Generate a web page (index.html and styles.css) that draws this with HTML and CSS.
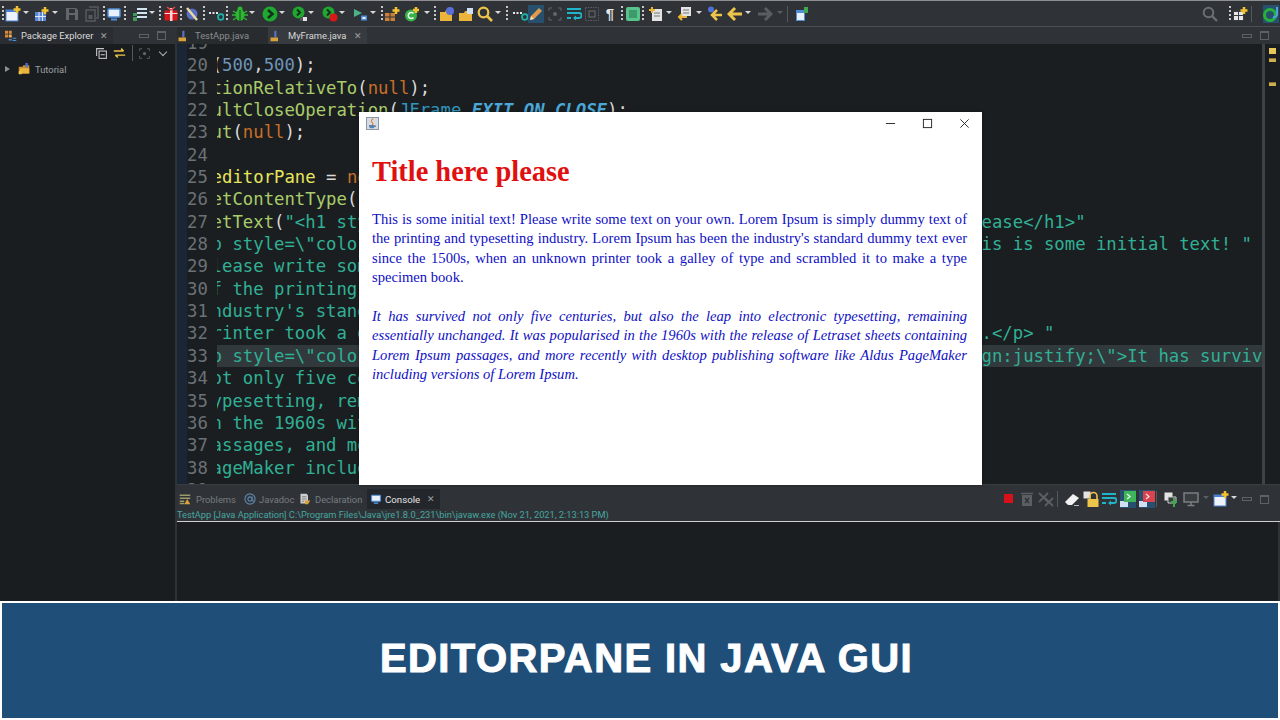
FILE: index.html
```html
<!doctype html>
<html lang="en">
  <head>
    <meta charset="UTF-8" />
    <title>EditorPane in Java GUI</title>
    <link rel="stylesheet" href="styles.css">
  </head>
  <body>
    <svg class="defs" width="0" height="0">
      <symbol id="i-new" viewBox="0 0 16 16"><rect x="1" y="4" width="12" height="11" fill="#eef3fb" stroke="#4a7fd0"/><rect x="1" y="4" width="12" height="2" fill="#4a7fd0"/><path d="M12 0v7M8.500 3.500h7" stroke="#f2c230" stroke-width="2.500"/></symbol>
      <symbol id="i-newgrid" viewBox="0 0 16 16"><rect x="1" y="6" width="11" height="9" fill="#5b86d6"/><path d="M1 10.500h11M5 6v9M8.500 6v9" stroke="#dfe8f8"/><path d="M11 1v7M7.500 4.500h7" stroke="#f2c230" stroke-width="2.500"/></symbol>
      <symbol id="i-save" viewBox="0 0 16 16"><path d="M2 2h10l2 2v10H2z" fill="#62676b"/><rect x="5" y="3" width="6" height="4" fill="#2f3337"/><rect x="5" y="9" width="6" height="5" fill="#2f3337"/></symbol>
      <symbol id="i-saveall" viewBox="0 0 16 16"><path d="M5 1h9v11h-2M2 4h9v11H2z" fill="none" stroke="#565b5f" stroke-width="1.500"/><rect x="4.500" y="9" width="4" height="4" fill="#565b5f"/></symbol>
      <symbol id="i-monitor" viewBox="0 0 16 16"><rect x="2" y="3" width="12" height="8" rx="1" fill="#e8f0fb" stroke="#4f8fd9" stroke-width="1.500"/><path d="M5 13.500h6" stroke="#4f8fd9" stroke-width="2"/></symbol>
      <symbol id="i-lines" viewBox="0 0 16 16"><path d="M5 3h10M5 7h10M5 11h10" stroke="#cfe6f2" stroke-width="1.800"/><path d="M1 7h4v3H1zM1 11h4v4H1z" fill="#3f9a5a"/></symbol>
      <symbol id="i-gift" viewBox="0 0 16 16"><rect x="1.500" y="4.500" width="13" height="10" rx="1" fill="#d7161d"/><rect x="7" y="2" width="2.500" height="13" fill="#f6dcdc"/><path d="M1.500 7.500h13" stroke="#f6dcdc"/><path d="M4 1l4 3 4-3" fill="none" stroke="#e44" stroke-width="1.500"/></symbol>
      <symbol id="i-nosearch" viewBox="0 0 16 16"><circle cx="8" cy="8" r="5.500" fill="#5a6fc0"/><path d="M3 2l10 12" stroke="#e9d8a8" stroke-width="2.500"/></symbol>
      <symbol id="i-dots" viewBox="0 0 16 16"><path d="M1 6h2v2H1zM4.500 6h2v2h-2zM8 6h2v2H8z" fill="#e8e8e8"/><path d="M10 11a2.800 2.800 0 1 0 5.600 0 2.800 2.800 0 1 0-5.600 0" fill="none" stroke="#1fb5a8" stroke-width="1.800"/></symbol>
      <symbol id="i-bug" viewBox="0 0 16 16"><ellipse cx="8" cy="9" rx="4.500" ry="6" fill="#2eb82e"/><circle cx="8" cy="3" r="2.500" fill="#2eb82e"/><path d="M1 5l3 2M15 5l-3 2M0 9h4M16 9h-4M1 14l3-2M15 14l-3-2" stroke="#2eb82e" stroke-width="1.500"/><path d="M8 4v11" stroke="#143" stroke-width="1"/></symbol>
      <symbol id="i-run" viewBox="0 0 16 16"><circle cx="8" cy="8" r="7.500" fill="#1fa82f"/><path d="M6 4l4.500 4L6 12" fill="none" stroke="#12301a" stroke-width="2.500"/></symbol>
      <symbol id="i-runcov" viewBox="0 0 16 16"><circle cx="6.500" cy="6.500" r="6" fill="#1fa82f"/><path d="M5 3.500l3 3-3 3" fill="none" stroke="#12301a" stroke-width="2"/><rect x="8" y="11" width="7" height="4" fill="#e4e4e4"/><rect x="8" y="11" width="3" height="4" fill="#555"/></symbol>
      <symbol id="i-runstop" viewBox="0 0 16 16"><circle cx="6.500" cy="6.500" r="6" fill="#1fa82f"/><path d="M5 3.500l3 3-3 3" fill="none" stroke="#12301a" stroke-width="2"/><circle cx="11.500" cy="11.500" r="4" fill="#d81818"/></symbol>
      <symbol id="i-ext" viewBox="0 0 16 16"><path d="M2 3l8 4-8 4z" fill="#4cb28a"/><rect x="9" y="9.500" width="6" height="5" fill="#4f8fd9"/><rect x="10.500" y="11" width="3" height="2" fill="#e8f0fb"/></symbol>
      <symbol id="i-package" viewBox="0 0 16 16"><path d="M1 7h10v8H1z" fill="#c9803a"/><path d="M1 11h10M6 7v8" stroke="#2f3337"/><path d="M12 1v7M8.500 4.500h7" stroke="#f2c230" stroke-width="2.500"/></symbol>
      <symbol id="i-class" viewBox="0 0 16 16"><circle cx="7" cy="9.500" r="6" fill="#37b34a"/><path d="M9.500 7.500a3 3 0 1 0 0 4" fill="none" stroke="#eaf6ea" stroke-width="1.500"/><path d="M12 1v6M9 4h6" stroke="#f2c230" stroke-width="2.500"/></symbol>
      <symbol id="i-folderblue" viewBox="0 0 16 16"><path d="M1 6h5l1-2h6v11H1z" fill="#eab53a"/><circle cx="11" cy="5" r="4" fill="#5a6fd8"/></symbol>
      <symbol id="i-folderdoc" viewBox="0 0 16 16"><path d="M1 7h5l1-2h7v10H1z" fill="#eab53a"/><rect x="9" y="2" width="6" height="6" fill="#cfe0f4"/></symbol>
      <symbol id="i-search" viewBox="0 0 16 16"><circle cx="6.500" cy="6.500" r="4.800" fill="none" stroke="#eec54a" stroke-width="2.200"/><path d="M10 10l5 5" stroke="#eec54a" stroke-width="2.600"/></symbol>
      <symbol id="i-searchgrey" viewBox="0 0 16 16"><circle cx="6.500" cy="6.500" r="4.800" fill="none" stroke="#6a6f73" stroke-width="2"/><path d="M10 10l5 5" stroke="#6a6f73" stroke-width="2.400"/></symbol>
      <symbol id="i-pencil" viewBox="0 0 16 16"><path d="M2 14l1-4 8-8 3 3-8 8z" fill="#e09a4a"/><path d="M2 14l1-4 3 3z" fill="#f2dcb8"/></symbol>
      <symbol id="i-focus" viewBox="0 0 16 16"><path d="M2 5V2h3M11 2h3v3M14 11v3h-3M5 14H2v-3" fill="none" stroke="#62676b"/><circle cx="8" cy="8" r="2" fill="#62676b"/></symbol>
      <symbol id="i-wrap" viewBox="0 0 16 16"><path d="M1 3h14M1 7h12a2.500 2.500 0 0 1 0 5H9M1 12h4" fill="none" stroke="#1fb5c8" stroke-width="1.800"/><path d="M10 9.500l-3 2.500 3 2.500z" fill="#1fb5c8"/></symbol>
      <symbol id="i-block" viewBox="0 0 16 16"><rect x="1.500" y="1.500" width="13" height="13" fill="none" stroke="#585d61" stroke-dasharray="1.500 1"/><rect x="5" y="5" width="6" height="6" fill="none" stroke="#6a6f73"/></symbol>
      <symbol id="i-mark" viewBox="0 0 16 16"><rect x="1" y="1" width="14" height="14" rx="2" fill="#58c48c"/><rect x="4" y="4" width="8" height="8" fill="#3e9a6a"/></symbol>
      <symbol id="i-docprev" viewBox="0 0 16 16"><path d="M4 3h10v12H4z" fill="#e4e4e4"/><path d="M6 7h6M6 10h6" stroke="#777"/><path d="M4 1v6M1 4h6" stroke="#eab53a" stroke-width="2"/></symbol>
      <symbol id="i-docnext" viewBox="0 0 16 16"><path d="M4 1h10v9H4z" fill="#e4e4e4"/><path d="M6 4h6M6 7h6" stroke="#777"/><path d="M10 11H2M5 8l-3 3 3 3" fill="none" stroke="#eab53a" stroke-width="2"/></symbol>
      <symbol id="i-lastedit" viewBox="0 0 16 16"><circle cx="4" cy="3.500" r="3" fill="#4f70d8"/><path d="M15 9H6M10 4L5 9l5 5" fill="none" stroke="#eec54a" stroke-width="2.500"/></symbol>
      <symbol id="i-back" viewBox="0 0 16 16"><path d="M15 8H3M8 2L2 8l6 6" fill="none" stroke="#eec54a" stroke-width="3"/></symbol>
      <symbol id="i-fwd" viewBox="0 0 16 16"><path d="M1 8h12M8 2l6 6-6 6" fill="none" stroke="#595e62" stroke-width="3"/></symbol>
      <symbol id="i-pin" viewBox="0 0 16 16"><path d="M2 4h9v11H2z" fill="#4f8fd9"/><rect x="3" y="7" width="7" height="7" fill="#e8f0fb"/><rect x="10" y="1" width="4" height="6" fill="#3ea84e"/></symbol>
      <symbol id="i-persp" viewBox="0 0 16 16"><rect x="1" y="4" width="11" height="11" fill="#3a3d40"/><path d="M2 6h4v3H2zM7 6h4v3H7zM2 10h4v4H2zM7 10h4v4H7z" fill="#e8e8e8"/><path d="M12 1v7M8.500 4.500h7" stroke="#f2c230" stroke-width="2.500"/></symbol>
      <symbol id="i-java" viewBox="0 0 16 16"><circle cx="7" cy="9" r="5.500" fill="none" stroke="#26b23a" stroke-width="3"/><path d="M14 1v7a3 3 0 0 1-4 3" fill="none" stroke="#4fa3e0" stroke-width="2"/></symbol>
      <symbol id="i-duke" viewBox="0 0 16 16"><path d="M9 1q-5 3-1 6q2 2-1 3" fill="none" stroke="#e08030" stroke-width="1.500"/><path d="M3 10h8v2q0 3-4 3t-4-3zM11 11h2v2h-2z" fill="#5a82b0"/></symbol>
      <symbol id="i-collapse" viewBox="0 0 16 16"><path d="M2 11V2h9" fill="none" stroke="#c8c8c8" stroke-width="1.300"/><rect x="5" y="5" width="9" height="9" fill="none" stroke="#c8c8c8" stroke-width="1.300"/><path d="M7 9.500h5" stroke="#c8c8c8" stroke-width="1.300"/></symbol>
      <symbol id="i-link" viewBox="0 0 16 16"><path d="M1 5h12M10 2l3 3M15 10H3M6 13l-3-3" fill="none" stroke="#eec54a" stroke-width="1.800"/></symbol>
      <symbol id="i-pkgview" viewBox="0 0 16 16"><path d="M0 1h4v4H0zM5 1h4v4H5zM0 6h4v4H0z" fill="#d98a3a"/><path d="M5 6h4v4H5z" fill="#f0b050"/><path d="M10 11h5M10 14h5" stroke="#4f8fd9" stroke-width="1.500"/><path d="M5 13h4" stroke="#4f8fd9" stroke-width="2"/></symbol>
      <symbol id="i-file" viewBox="0 0 16 16"><path d="M7 1h3v9H7z" fill="#5a6fc0"/><path d="M2 10h10v5H2z" fill="#d9a23a"/></symbol>
      <symbol id="i-project" viewBox="0 0 16 16"><path d="M1 5h5l1-2h8v11H1z" fill="#c98a30"/><path d="M3 7h12v7H1z" fill="#eab53a"/><rect x="10" y="0" width="3" height="6" fill="#4f70d8"/><rect x="1" y="11" width="4" height="4" fill="#eec54a"/></symbol>
      <symbol id="i-problems" viewBox="0 0 16 16"><path d="M1 3h14M1 7h14M1 11h6M1 14h6" stroke="#9a9a6a" stroke-width="2"/><path d="M11 8l4 7H7z" fill="#d9a23a"/></symbol>
      <symbol id="i-at" viewBox="0 0 16 16"><circle cx="8" cy="8" r="6.800" fill="none" stroke="#5f86ac" stroke-width="1.500"/><circle cx="8" cy="8" r="2.800" fill="none" stroke="#5f86ac" stroke-width="1.500"/><path d="M11 5v4.500q0 2 2.800 1" fill="none" stroke="#5f86ac" stroke-width="1.300"/></symbol>
      <symbol id="i-decl" viewBox="0 0 16 16"><path d="M2 1h8l2 2v11H2z" fill="#cfcfcf"/><path d="M4 5h6M4 8h6M4 11h3" stroke="#666"/><path d="M8 10h7l-3 5H8z" fill="#d9a23a"/></symbol>
      <symbol id="i-stop" viewBox="0 0 16 16"><rect x="3" y="3" width="9" height="9" fill="#d8101a"/></symbol>
      <symbol id="i-trash" viewBox="0 0 16 16"><path d="M3 4h10v11H3z" fill="#5a5f63"/><path d="M2 2.500h12" stroke="#5a5f63" stroke-width="1.500"/><path d="M6 7l4 5M10 7l-4 5" stroke="#2f3337" stroke-width="1.300"/></symbol>
      <symbol id="i-removeall" viewBox="0 0 16 16"><path d="M1 2l9 9M10 2l-9 9M7 7l8 8M15 7l-8 8" stroke="#5a5f63" stroke-width="1.800"/></symbol>
      <symbol id="i-eraser" viewBox="0 0 16 16"><path d="M1 11l8-8 6 4-7 7H4z" fill="#f2f2f2"/><path d="M10 14.500h5" stroke="#bbb" stroke-width="1"/></symbol>
      <symbol id="i-lock" viewBox="0 0 16 16"><rect x="0" y="0" width="8" height="8" fill="#e4e4e4" stroke="#333"/><path d="M7 8V5a3.500 3.500 0 0 1 7 0v3" fill="none" stroke="#eec54a" stroke-width="1.600"/><rect x="4.500" y="8" width="11" height="8" fill="#eec54a"/></symbol>
      <symbol id="i-congreen" viewBox="0 0 16 16"><rect x="0" y="10" width="8" height="6" fill="#cfe0f4"/><rect x="4" y="0" width="12" height="11" fill="#3fb55a"/><path d="M7 3l3 2.500L7 8" fill="none" stroke="#e8f6ea" stroke-width="1.300"/></symbol>
      <symbol id="i-conred" viewBox="0 0 16 16"><rect x="0" y="10" width="8" height="6" fill="#cfe0f4"/><rect x="4" y="0" width="12" height="11" fill="#d8434f"/><path d="M7 3l3 2.500L7 8" fill="none" stroke="#f6e0e2" stroke-width="1.300"/></symbol>
      <symbol id="i-pinview" viewBox="0 0 16 16"><rect x="1" y="1" width="9" height="9" fill="#e4e4e4" stroke="#333"/><path d="M5 6h8v6H5z" fill="#3a3d40" stroke="#ccc"/><path d="M11 7v9" stroke="#3ea84e" stroke-width="2"/><path d="M8 11h6" stroke="#3ea84e" stroke-width="2"/></symbol>
      <symbol id="i-mongrey" viewBox="0 0 16 16"><rect x="1" y="2" width="14" height="9" fill="#3a3d40" stroke="#7a7f83" stroke-width="1.500"/><path d="M8 11v3M4.500 14.500h7" stroke="#7a7f83" stroke-width="1.500"/></symbol>
    </svg>

    <div class="ide">
      <div class="toolbar">
        <i class="sep first"></i>
        <svg class="tool"><use href="#i-new"/></svg><i class="caret"></i>
        <svg class="tool"><use href="#i-newgrid"/></svg><i class="caret"></i>
        <svg class="tool ml1"><use href="#i-save"/></svg>
        <svg class="tool ml2"><use href="#i-saveall"/></svg>
        <i class="sep"></i>
        <svg class="tool"><use href="#i-monitor"/></svg>
        <i class="sep mln1"></i>
        <svg class="tool ml5"><use href="#i-lines"/></svg><i class="caret mln1"></i>
        <i class="sep mln2"></i>
        <svg class="tool ml1"><use href="#i-gift"/></svg>
        <i class="sep mln2"></i>
        <svg class="tool ml1"><use href="#i-nosearch"/></svg>
        <i class="sep"></i>
        <svg class="tool ml2"><use href="#i-dots"/></svg>
        <i class="sep mln1"></i>
        <svg class="tool ml3"><use href="#i-bug"/></svg><i class="caret mln1"></i>
        <svg class="tool ml2"><use href="#i-run"/></svg><i class="caret mln1"></i>
        <svg class="tool ml2"><use href="#i-runcov"/></svg><i class="caret mln2"></i>
        <svg class="tool ml3"><use href="#i-runstop"/></svg><i class="caret mln1"></i>
        <svg class="tool ml2"><use href="#i-ext"/></svg><i class="caret"></i>
        <i class="sep mln1"></i>
        <svg class="tool"><use href="#i-package"/></svg>
        <svg class="tool ml2"><use href="#i-class"/></svg><i class="caret ml2"></i>
        <i class="sep mln2"></i>
        <svg class="tool ml2"><use href="#i-folderblue"/></svg>
        <svg class="tool ml1"><use href="#i-folderdoc"/></svg>
        <svg class="tool ml1"><use href="#i-search"/></svg><i class="caret"></i>
        <i class="sep mln1"></i>
        <svg class="tool ml3"><use href="#i-dots"/></svg>
        <span class="tool-on mln2"><svg class="tool"><use href="#i-pencil"/></svg></span>
        <svg class="tool ml1"><use href="#i-focus"/></svg>
        <svg class="tool ml1"><use href="#i-wrap"/></svg>
        <svg class="tool"><use href="#i-block"/></svg>
        <span class="tool pilcrow">¶</span>
        <i class="sep"></i>
        <svg class="tool ml1"><use href="#i-mark"/></svg>
        <i class="sep mln2"></i>
        <svg class="tool ml3"><use href="#i-docprev"/></svg><i class="caret"></i>
        <svg class="tool"><use href="#i-docnext"/></svg><i class="caret ml1"></i>
        <svg class="tool"><use href="#i-lastedit"/></svg>
        <svg class="tool ml2"><use href="#i-back"/></svg><i class="caret"></i>
        <svg class="tool ml1"><use href="#i-fwd"/></svg><i class="caret dim ml2"></i>
        <i class="rule mln1"></i>
        <svg class="tool ml2"><use href="#i-pin"/></svg>
        <div class="toolbar-end">
          <svg class="tool"><use href="#i-searchgrey"/></svg>
          <i class="sep ml8"></i>
          <svg class="tool"><use href="#i-persp"/></svg>
          <i class="rule ml1"></i>
          <span class="tool-on ml7"><svg class="tool"><use href="#i-java"/></svg></span>
        </div>
      </div>

      <div class="workspace">
        <aside class="explorer">
          <div class="tabbar">
            <div class="tab tab-view">
              <svg class="icon"><use href="#i-pkgview"/></svg>
              <span>Package Explorer</span>
              <span class="close">✕</span>
            </div>
            <div class="win-btns">
              <i class="btn-min"></i><i class="btn-max"></i>
            </div>
          </div>
          <div class="view-tools">
            <svg class="icon"><use href="#i-collapse"/></svg>
            <svg class="icon"><use href="#i-link"/></svg>
            <i class="rule"></i>
            <svg class="icon"><use href="#i-focus"/></svg>
            <span class="chevron"></span>
          </div>
          <div class="tree-row">
            <span class="twisty"></span>
            <svg class="icon"><use href="#i-project"/></svg>
            <span>Tutorial</span>
          </div>
        </aside>

        <div class="main">
          <section class="editor-pane">
            <div class="tabbar">
              <div class="tab tab-back">
                <svg class="icon"><use href="#i-file"/></svg>
                <span>TestApp.java</span>
              </div>
              <div class="tab tab-front">
                <svg class="icon"><use href="#i-file"/></svg>
                <span>MyFrame.java</span>
                <span class="close">✕</span>
              </div>
              <div class="win-btns">
                <i class="btn-min"></i><i class="btn-max"></i>
              </div>
            </div>
            <div class="editor">
              <div class="code">
                <div class="line"><span class="ln">19</span><span class="src"></span></div>
                <div class="line"><span class="ln">20</span><span class="src">(<b class="n">500</b>,<b class="n">500</b>);</span></div>
                <div class="line"><span class="ln">21</span><span class="src"><b class="m">tionRelativeTo</b>(<b class="k">null</b>);</span></div>
                <div class="line"><span class="ln">22</span><span class="src"><b class="m">ultCloseOperation</b>(<b class="t">JFrame</b>.<b class="f">EXIT_ON_CLOSE</b>);</span></div>
                <div class="line"><span class="ln">23</span><span class="src"><b class="m">ut</b>(<b class="k">null</b>);</span></div>
                <div class="line"><span class="ln">24</span><span class="src"></span></div>
                <div class="line"><span class="ln">25</span><span class="src"><b class="v">editorPane</b> = <b class="k">new</b> <b class="t">JEditorPane</b>();</span></div>
                <div class="line"><span class="ln">26</span><span class="src"><b class="m">etContentType</b>(<b class="s">"text/html"</b>);</span></div>
                <div class="line"><span class="ln">27</span><span class="src"><b class="m">etText</b>(<b class="s">"&lt;h1 style=\"color:red;font-size:30px;margin:1px 0;\"&gt;Title here please&lt;/h1&gt;"</b></span></div>
                <div class="line"><span class="ln">28</span><span class="src"><b class="s">p style=\"color:blue;font-size:15px;font-family:serif;margin:0 0 1px;\"&gt;This is some initial text! "</b></span></div>
                <div class="line"><span class="ln">29</span><span class="src"><b class="s">lease write some text on your own. Lorem Ipsum is simply dummy text of "</b></span></div>
                <div class="line"><span class="ln">30</span><span class="src"><b class="s">f the printing and typesetting industry. Lorem Ipsum has been the "</b></span></div>
                <div class="line"><span class="ln">31</span><span class="src"><b class="s">ndustry's standard dummy text ever since the 1500s, when an unknown "</b></span></div>
                <div class="line"><span class="ln">32</span><span class="src"><b class="s">rinter took a galley of type and scrambled it to make a type specimen book.&lt;/p&gt; "</b></span></div>
                <div class="line line-current"><span class="ln">33</span><span class="src"><b class="s">p style=\"color:blue;font-style:italic;font-size:15px;margin:10px;text-align:justify;\"&gt;It has survived not only five centuries</b></span></div>
                <div class="line"><span class="ln">34</span><span class="src"><b class="s">ot only five centuries, but also the leap into electronic "</b></span></div>
                <div class="line"><span class="ln">35</span><span class="src"><b class="s">ypesetting, remaining essentially unchanged. It was popularised "</b></span></div>
                <div class="line"><span class="ln">36</span><span class="src"><b class="s">n the 1960s with the release of Letraset sheets containing Lorem "</b></span></div>
                <div class="line"><span class="ln">37</span><span class="src"><b class="s">assages, and more recently with desktop publishing software like "</b></span></div>
                <div class="line"><span class="ln">38</span><span class="src"><b class="s">ageMaker including versions of Lorem Ipsum.&lt;/p&gt;"</b></span></div>
                <div class="line"><span class="ln">39</span><span class="src"></span></div>
              </div>
              <div class="overview">
                <i class="mark mark-square"></i>
                <i class="mark"></i>
                <i class="mark mark-low"></i>
              </div>
            </div>
          </section>

          <section class="console-pane">
            <div class="tabbar console-tabs">
              <div class="tab tab-console tab-problems">
                <svg class="icon"><use href="#i-problems"/></svg><span>Problems</span>
              </div>
              <div class="tab tab-console tab-javadoc">
                <svg class="icon"><use href="#i-at"/></svg><span>Javadoc</span>
              </div>
              <div class="tab tab-console tab-declaration">
                <svg class="icon"><use href="#i-decl"/></svg><span>Declaration</span>
              </div>
              <div class="tab tab-console-on">
                <svg class="icon"><use href="#i-monitor"/></svg><span>Console</span>
                <span class="close">✕</span>
              </div>
              <div class="console-tools">
                <svg class="tool"><use href="#i-stop"/></svg>
                <svg class="tool"><use href="#i-trash"/></svg>
                <svg class="tool ml1"><use href="#i-removeall"/></svg>
                <i class="rule"></i>
                <svg class="tool ml2"><use href="#i-eraser"/></svg>
                <svg class="tool ml1"><use href="#i-lock"/></svg>
                <svg class="tool"><use href="#i-wrap"/></svg>
                <span class="tool-on ml1"><svg class="tool"><use href="#i-congreen"/></svg></span>
                <span class="tool-on ml1"><svg class="tool"><use href="#i-conred"/></svg></span>
                <i class="rule mln1"></i>
                <svg class="tool ml2"><use href="#i-pinview"/></svg>
                <svg class="tool ml2"><use href="#i-mongrey"/></svg><i class="caret dim ml2"></i>
                <svg class="tool mln1"><use href="#i-new"/></svg><i class="caret"></i>
                <i class="btn-min"></i><i class="btn-max"></i>
              </div>
            </div>
            <div class="console-title">TestApp [Java Application] C:\Program Files\Java\jre1.8.0_231\bin\javaw.exe (Nov 21, 2021, 2:13:13 PM)</div>
            <div class="console-body"></div>
          </section>
        </div>
      </div>

      <div class="frame">
        <div class="frame-title">
          <span class="frame-icon"><svg class="icon"><use href="#i-duke"/></svg></span>
          <div class="frame-btns">
            <svg viewBox="0 0 12 12"><path d="M1 6h10" stroke="#222"/></svg>
            <svg viewBox="0 0 12 12"><rect x="1.500" y="1.500" width="9" height="9" fill="none" stroke="#222"/></svg>
            <svg viewBox="0 0 12 12"><path d="M1.500 1.500l9 9M10.500 1.500l-9 9" stroke="#222"/></svg>
          </div>
        </div>
        <div class="frame-body">
          <h1>Title here please</h1>
          <p>This is some initial text! Please write some text on your own. Lorem Ipsum is simply dummy text of the printing and typesetting industry. Lorem Ipsum has been the industry's standard dummy text ever since the 1500s, when an unknown printer took a galley of type and scrambled it to make a type specimen book.</p>
          <p class="note">It has survived not only five centuries, but also the leap into electronic typesetting, remaining essentially unchanged. It was popularised in the 1960s with the release of Letraset sheets containing Lorem Ipsum passages, and more recently with desktop publishing software like Aldus PageMaker including versions of Lorem Ipsum.</p>
        </div>
      </div>
    </div>

    <footer class="banner">EDITORPANE IN JAVA GUI</footer>
  </body>
</html>
```

FILE: styles.css
```css
* {
  box-sizing: border-box;
  margin: 0;
  padding: 0;
}
body {
  width: 1280px;
  height: 720px;
  overflow: hidden;
  background: #ffffff;
  font-family: Roboto, 'Noto Sans', sans-serif;
  display: flex;
  flex-direction: column;
}
i {
  display: block;
  flex: none;
}
.defs {
  display: block;
  height: 0;
}
.ide {
  position: relative;
  height: 601px;
  flex: none;
  display: flex;
  flex-direction: column;
  background: #2f3337;
  overflow: hidden;
}

/* main toolbar */
.toolbar {
  height: 27px;
  flex: none;
  display: flex;
  align-items: center;
  gap: 2px;
  border-top: 1px solid #8d8f91;
  border-bottom: 1px solid #4b4f52;
}
.toolbar-end,
.console-tools {
  margin-left: auto;
  display: flex;
  align-items: center;
  gap: 2px;
  padding-right: 1px;
}
.tool {
  width: 16px;
  height: 16px;
  flex: none;
}
.tool-on {
  display: flex;
  flex: none;
  width: 16px;
  height: 18px;
  align-items: center;
  background: #27506e;
}
.pilcrow {
  font: bold 15px/16px 'Liberation Sans', sans-serif;
  color: #e4e4e4;
  text-align: center;
}
.caret {
  width: 0;
  height: 3px;
  margin-right: 3px;
  border-left: 3px solid transparent;
  border-right: 3px solid transparent;
  border-top: 3px solid #d8d8d8;
  box-sizing: content-box;
}
.caret.dim {
  border-top-color: #595e62;
}
.sep {
  width: 4px;
  height: 16px;
  margin-right: -2px;
  background: repeating-linear-gradient(#c8c8c8 0 2px, transparent 2px 4px) center / 2px 100% no-repeat;
}
.sep.first {
  margin-left: 1px;
}
.rule {
  width: 1px;
  height: 16px;
  margin: 0 2px 0 1px;
  background: #54585b;
}
.ml1 { margin-left: 1px; }
.ml2 { margin-left: 2px; }
.ml3 { margin-left: 3px; }
.ml5 { margin-left: 5px; }
.ml7 { margin-left: 7px; }
.ml8 { margin-left: 8px; }
.mln1 { margin-left: -1px; }
.mln2 { margin-left: -2px; }

/* panes */
.workspace {
  flex: 1;
  min-height: 0;
  display: flex;
  gap: 2px;
}
.explorer {
  width: 175px;
  flex: none;
  background: #1a1d20;
  display: flex;
  flex-direction: column;
  font-size: 9.4px;
}
.main {
  flex: 1;
  min-width: 0;
  display: flex;
  flex-direction: column;
  gap: 4px;
}
.tabbar {
  height: 17px;
  flex: none;
  display: flex;
  align-items: center;
  background: #2f3337;
  font-size: 9.4px;
}
.tab {
  height: 100%;
  display: flex;
  align-items: center;
  gap: 4px;
  white-space: nowrap;
}
.icon {
  width: 12px;
  height: 12px;
  flex: none;
}
.tab-view {
  width: 113px;
  padding-left: 5px;
  color: #dcdcdc;
  background: #2a2d31;
}
.tab-back {
  width: 91px;
  gap: 6px;
  color: #8b8f92;
  background: #292c2f;
}
.tab-front {
  width: 99px;
  padding-left: 1px;
  gap: 7px;
  color: #d8d8d8;
  background: #373b3f;
}
.close {
  margin-left: auto;
  margin-right: 5px;
  font-size: 9px;
  color: #a0a0a0;
}
.win-btns {
  margin-left: auto;
  margin-right: 9px;
  display: flex;
  align-items: center;
  gap: 8px;
}
.main .win-btns {
  margin-right: 11px;
}
.btn-min {
  width: 10px;
  height: 4px;
  border: 1px solid #5e6266;
}
.btn-max {
  width: 9px;
  height: 9px;
  border: 1px solid #5e6266;
  border-top-width: 2px;
}
.console-tools .btn-max {
  margin-left: 6px;
}
.view-tools {
  height: 18px;
  flex: none;
  display: flex;
  align-items: center;
  justify-content: flex-end;
  gap: 5px;
  padding-right: 6px;
}
.view-tools .icon {
  width: 13px;
  height: 13px;
}
.view-tools .rule {
  margin-right: 0;
}
.chevron {
  width: 6px;
  height: 6px;
  margin: -3px 3px 0 4px;
  border-right: 1px solid #b0b0b0;
  border-bottom: 1px solid #b0b0b0;
  transform: rotate(45deg);
}
.tree-row {
  display: flex;
  align-items: center;
  gap: 5px;
  height: 14px;
  padding-left: 5px;
  color: #9ba0a3;
}
.twisty {
  width: 0;
  height: 0;
  margin-right: 3px;
  border-left: 5px solid #8c9093;
  border-top: 3px solid transparent;
  border-bottom: 3px solid transparent;
}

/* editor */
.editor-pane {
  height: 458px;
  flex: none;
  display: flex;
  flex-direction: column;
}
.editor {
  flex: 1;
  min-height: 0;
  display: flex;
  overflow: hidden;
  background: #1b1e21;
  border-bottom: 1px solid #3a3d40;
}
.code {
  flex: 1;
  min-width: 0;
  margin-top: -12.2px;
  border-right: 3px solid #3f4347;
  font: 17.3px 'DejaVu Sans Mono', monospace;
  color: #d9d9d9;
}
.line {
  height: 22.37px;
  line-height: 22.37px;
  display: flex;
}
.ln {
  width: 40px;
  flex: none;
  padding-left: 10px;
  color: #6b7276;
  background: linear-gradient(90deg, #1a2536 10px, transparent 10px);
}
.src {
  flex: 1;
  min-width: 0;
  overflow: hidden;
  white-space: pre;
  text-indent: -5.4px;
}
.line-current .src {
  background: #32393d;
}
.src b {
  font-weight: normal;
}
.src .n { color: #6d94b8; }
.src .m { color: #a9cc6a; }
.src .k { color: #c96f28; }
.src .t { color: #2f97bd; }
.src .f { color: #4aa8d8; font-weight: bold; font-style: italic; }
.src .v { color: #e6e65e; }
.src .s { color: #30b094; }
.overview {
  width: 15px;
  flex: none;
  display: flex;
  flex-direction: column;
  align-items: center;
  padding-top: 4px;
}
.mark {
  width: 7px;
  height: 4px;
  margin-bottom: 20px;
  background: #cfae4e;
  border-top: 1px solid #8a7434;
}
.mark-square {
  height: 6px;
  margin-bottom: 4px;
  background: #e8c75a;
  border: 0;
}

/* console */
.console-pane {
  flex: 1;
  min-height: 0;
  display: flex;
  flex-direction: column;
}
.console-tabs {
  height: 20px;
}
.tab-console {
  flex: none;
  color: #777c80;
}
.tab-problems {
  width: 67px;
  padding-left: 2px;
  gap: 5px;
}
.tab-javadoc {
  width: 55px;
  gap: 3px;
}
.tab-declaration {
  width: 68px;
}
.tab-console-on {
  width: 73px;
  padding-left: 3px;
  gap: 3px;
  font-size: 9.7px;
  color: #e4e4e4;
  background: #23272b;
}
.console-tools {
  padding-right: 11px;
}
.console-title {
  height: 13px;
  flex: none;
  background: #2f3337;
  border-bottom: 1px solid #cfcfcf;
  font-size: 9.26px;
  line-height: 12px;
  color: #46a6a0;
  white-space: nowrap;
}
.console-body {
  flex: 1;
  background: #1b1e21;
  margin-right: 2px;
}

/* the running JFrame, floats over the IDE */
.frame {
  position: absolute;
  left: 359px;
  top: 112px;
  width: 623px;
  height: 373px;
  background: #ffffff;
  box-shadow: 0 0 3px rgba(0, 0, 0, 0.4);
}
.frame-title {
  height: 23px;
  display: flex;
  align-items: center;
  padding-left: 7px;
}
.frame-icon {
  display: flex;
  width: 13px;
  height: 13px;
  background: #d6dce4;
  border: 1px solid #8c96a4;
}
.frame-icon .icon {
  width: 11px;
  height: 11px;
}
.frame-btns {
  margin-left: auto;
  display: flex;
  gap: 26px;
  padding-right: 12px;
}
.frame-btns svg {
  width: 11px;
  height: 11px;
}
.frame-body {
  padding: 21px 15px 0 13px;
  font-family: 'Liberation Serif', 'Times New Roman', serif;
  color: #1010c4;
}
.frame-body h1 {
  font-size: 28.4px;
  line-height: 32px;
  color: #e01010;
  margin-bottom: 22px;
}
.frame-body p {
  font-size: 14.6px;
  line-height: 19.3px;
  text-align: justify;
  margin-bottom: 20px;
}
.frame-body .note {
  font-style: italic;
}

/* caption */
.banner {
  height: 115px;
  flex: none;
  margin: 2px 2px 0;
  padding: 0 0 5px 13px;
  background: #1f4e79;
  color: #ffffff;
  font: bold 40px 'Liberation Sans', Arial, sans-serif;
  letter-spacing: 1.4px;
  -webkit-text-stroke: 1px #ffffff;
  display: flex;
  align-items: center;
  justify-content: center;
}
```
